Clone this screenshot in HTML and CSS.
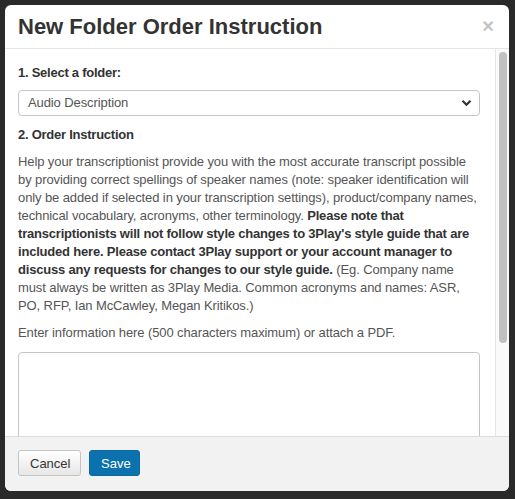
FILE: index.html
```html
<!DOCTYPE html>
<html>
<head>
<meta charset="utf-8">
<link rel="stylesheet" href="styles.css">
</head>
<body>
<div class="backdrop">
  <div class="modal">
    <div class="modal-header">
      <h3 class="modal-title">New Folder Order Instruction</h3>
      <span class="close">×</span>
    </div>
    <div class="modal-body">
      <div class="body-content">
        <div class="label">1. Select a folder:</div>
        <div class="select">
          <span>Audio Description</span>
          <svg class="caret" width="11" height="8" viewBox="0 0 11 8"><path d="M1.5 1.8 L5.5 5.8 L9.5 1.8" fill="none" stroke="#333" stroke-width="2.2"/></svg>
        </div>
        <div class="label label-2">2. Order Instruction</div>
        <p class="help">Help your transcriptionist provide you with the most accurate transcript possible by providing correct spellings of speaker names (note: speaker identification will only be added if selected in your transcription settings), product/company names, technical vocabulary, acronyms, other terminology. <b>Please note that<br>transcriptionists will not follow style changes to 3Play's style guide that are<br>included here. Please contact 3Play support or your account manager to<br>discuss any requests for changes to our style guide.</b> (Eg. Company name<br>must always be written as 3Play Media. Common acronyms and names: ASR, PO, RFP, Ian McCawley, Megan Kritikos.)</p>
        <p class="enter">Enter information here (500 characters maximum) or attach a PDF.</p>
        <div class="textarea"></div>
      </div>
      <div class="scrollbar"><div class="thumb"></div></div>
    </div>
    <div class="modal-footer">
      <button class="btn btn-default">Cancel</button>
      <button class="btn btn-primary">Save</button>
    </div>
  </div>
</div>
</body>
</html>
```
FILE: styles.css
```css
html, body {
  margin: 0;
  padding: 0;
  background: #2a2a2a;
  font-family: "Liberation Sans", Arial, sans-serif;
  color: #333;
}
.backdrop {
  width: 515px;
  height: 499px;
  padding: 5px 0 0 5px;
  box-sizing: border-box;
}
.modal {
  width: 504px;
  height: 486px;
  background: #fff;
  border-radius: 6px;
  overflow: hidden;
  display: flex;
  flex-direction: column;
}
.modal-header {
  height: 43px;
  flex: none;
  border-bottom: 1px solid #e5e5e5;
  display: flex;
  align-items: center;
  justify-content: space-between;
  padding: 0 15px 0 13px;
}
.modal-title {
  margin: 0;
  font-size: 22px;
  font-weight: bold;
  color: #333;
  line-height: 26px;
}
.close {
  font-size: 20px;
  font-weight: bold;
  color: #c4c4c4;
  line-height: 20px;
  margin-top: -2px;
}
.modal-body {
  flex: 1;
  display: flex;
  min-height: 0;
  overflow: hidden;
}
.body-content {
  flex: 1;
  padding: 15px 15px 0 13px;
  font-size: 13px;
  line-height: 18px;
  letter-spacing: -0.1px;
}
.label {
  font-weight: bold;
  color: #333;
  letter-spacing: -0.25px;
}
.select {
  margin-top: 8px;
  height: 26px;
  box-sizing: border-box;
  border: 1px solid #c6c6c6;
  border-radius: 4px;
  display: flex;
  align-items: center;
  justify-content: space-between;
  padding: 0 7px 0 9px;
  color: #555;
  font-size: 13px;
}
.caret { display: block; }
.label-2 { margin-top: 10px; }
.help {
  margin: 9px 0 0;
  color: #555;
}
.help b {
  color: #333;
  letter-spacing: -0.2px;
}
.enter {
  margin: 9px 0 0;
  color: #555;
}
.textarea {
  margin-top: 10px;
  height: 120px;
  border: 1px solid #c6c6c6;
  border-radius: 4px;
}
.scrollbar {
  width: 14px;
  flex: none;
  border-left: 1px solid #e6e6e6;
  padding: 3px 0 0 3px;
  box-sizing: border-box;
  background: #fafafa;
}
.thumb {
  width: 8px;
  height: 291px;
  border-radius: 4px;
  background: #c1c1c1;
}
.modal-footer {
  height: 55px;
  flex: none;
  box-sizing: border-box;
  border-top: 1px solid #dcdcdc;
  background: #f2f2f2;
  display: flex;
  align-items: flex-start;
  gap: 8px;
  padding: 13px 0 0 13px;
}
.btn {
  height: 26px;
  font-family: "Liberation Sans", Arial, sans-serif;
  font-size: 13px;
  border-radius: 3px;
  padding: 0 11px;
  margin: 0;
  cursor: pointer;
}
.btn-default {
  width: 63px;
  background: linear-gradient(#fff, #e6e6e6);
  border: 1px solid #c4c4c4;
  color: #333;
}
.btn-primary {
  width: 51px;
  background: #0b72ad;
  border: 1px solid #0b6aa2;
  color: #fff;
}
```
